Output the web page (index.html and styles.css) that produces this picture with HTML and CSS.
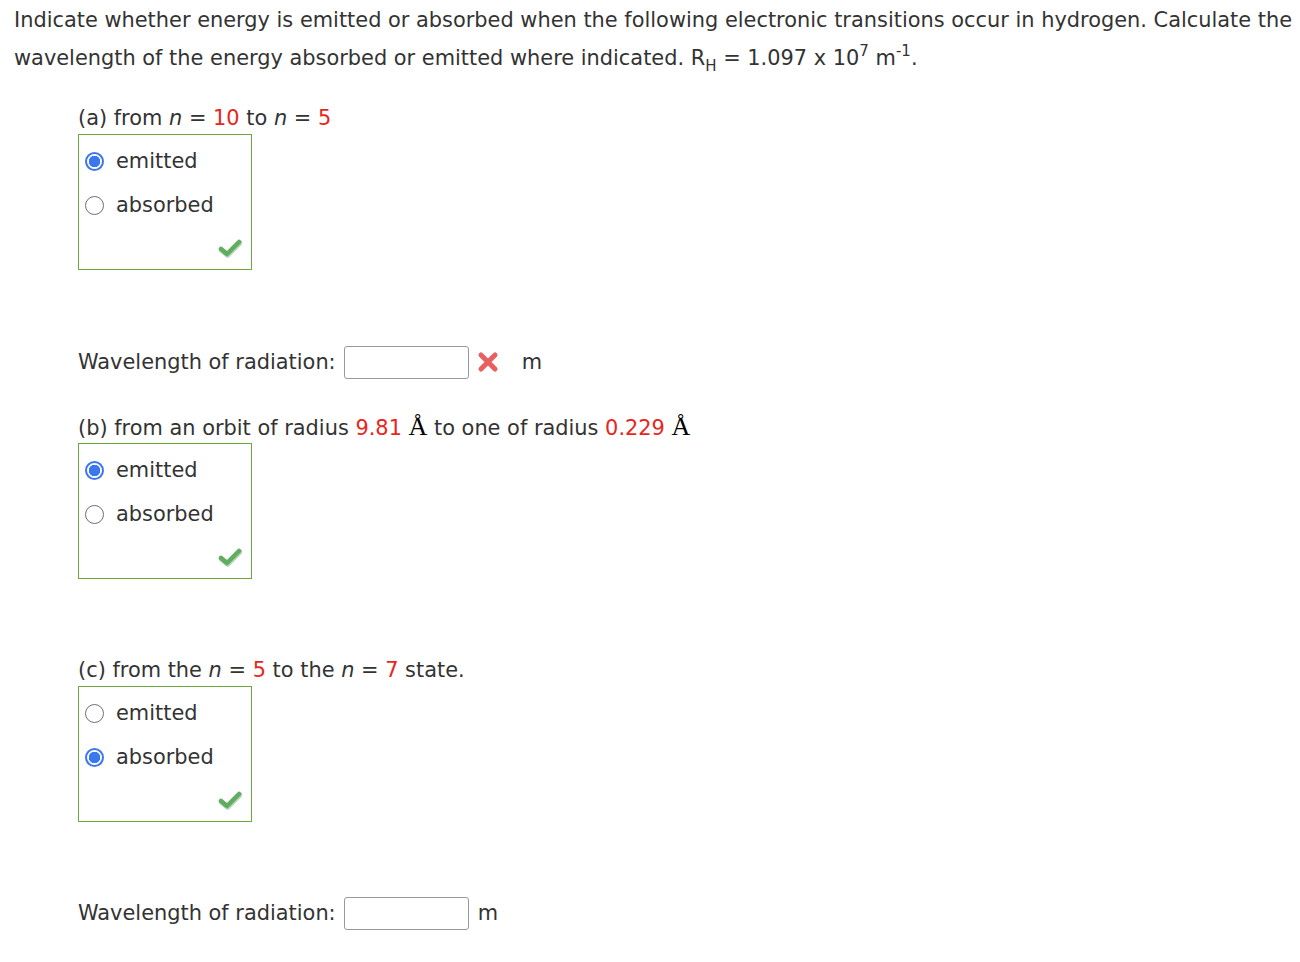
FILE: index.html
```html
<!DOCTYPE html>
<html>
<head>
<meta charset="utf-8">
<link rel="stylesheet" href="styles.css">
</head>
<body>
<div class="page">
  <p class="intro">Indicate whether energy is emitted or absorbed when the following electronic transitions occur in hydrogen. Calculate the<br>wavelength of the energy absorbed or emitted where indicated. R<sub>H</sub> = 1.097 x 10<sup>7</sup> m<sup>-1</sup>.</p>

  <div class="part first">
    <div class="label">(a) from <i>n</i> = <span class="red">10</span> to <i>n</i> = <span class="red">5</span></div>
    <div class="box">
      <div class="opt"><span class="radio on"></span>emitted</div>
      <div class="opt"><span class="radio"></span>absorbed</div>
      <div class="mark"><svg width="24" height="20" viewBox="0 0 24 20"><path d="M3 11 L9 16 L21 4" fill="none" stroke="#3e7e3e" stroke-opacity="0.35" stroke-width="5.5" stroke-linecap="round" stroke-linejoin="round" transform="translate(0.5,1)"/><path d="M3 11 L9 16 L21 4" fill="none" stroke="#5fae5f" stroke-width="4.5" stroke-linecap="round" stroke-linejoin="round"/></svg></div>
    </div>
    <div class="answer"><span class="prompt">Wavelength of radiation:</span><span class="input"></span><span class="cross"><svg width="22" height="22" viewBox="0 0 22 22"><path d="M4 4 L18 18 M18 4 L4 18" stroke="#e86060" stroke-width="5" stroke-linecap="round"/></svg></span><span class="unit spaced">m</span></div>
  </div>

  <div class="part">
    <div class="label">(b) from an orbit of radius <span class="red">9.81</span> <span class="ang">Å</span> to one of radius <span class="red">0.229</span> <span class="ang">Å</span></div>
    <div class="box">
      <div class="opt"><span class="radio on"></span>emitted</div>
      <div class="opt"><span class="radio"></span>absorbed</div>
      <div class="mark"><svg width="24" height="20" viewBox="0 0 24 20"><path d="M3 11 L9 16 L21 4" fill="none" stroke="#3e7e3e" stroke-opacity="0.35" stroke-width="5.5" stroke-linecap="round" stroke-linejoin="round" transform="translate(0.5,1)"/><path d="M3 11 L9 16 L21 4" fill="none" stroke="#5fae5f" stroke-width="4.5" stroke-linecap="round" stroke-linejoin="round"/></svg></div>
    </div>
  </div>

  <div class="part after-box">
    <div class="label">(c) from the <i>n</i> = <span class="red">5</span> to the <i>n</i> = <span class="red">7</span> state.</div>
    <div class="box">
      <div class="opt"><span class="radio"></span>emitted</div>
      <div class="opt"><span class="radio on"></span>absorbed</div>
      <div class="mark"><svg width="24" height="20" viewBox="0 0 24 20"><path d="M3 11 L9 16 L21 4" fill="none" stroke="#3e7e3e" stroke-opacity="0.35" stroke-width="5.5" stroke-linecap="round" stroke-linejoin="round" transform="translate(0.5,1)"/><path d="M3 11 L9 16 L21 4" fill="none" stroke="#5fae5f" stroke-width="4.5" stroke-linecap="round" stroke-linejoin="round"/></svg></div>
    </div>
    <div class="answer last"><span class="prompt">Wavelength of radiation:</span><span class="input"></span><span class="unit">m</span></div>
  </div>
</div>
</body>
</html>
```

FILE: styles.css
```css
html, body {
  margin: 0;
  padding: 0;
  background: #fff;
}
body {
  font-family: "DejaVu Sans", Verdana, sans-serif;
  font-size: 20.9px;
  color: #333;
}
.page {
  padding: 1px 0 0 14px;
}
.intro {
  margin: 0;
  line-height: 38px;
  white-space: nowrap;
}
.intro sub, .intro sup {
  font-size: 15px;
  line-height: 0;
}
.intro sub { vertical-align: -6px; }
.intro sup { vertical-align: 9px; }
.part {
  margin-left: 64px;
  padding-top: 33px;
}
.part.first {
  padding-top: 26px;
}
.part.after-box {
  padding-top: 76px;
}
.label {
  line-height: 30px;
  height: 30px;
  white-space: nowrap;
}
.red { color: #e8261c; }
.ang {
  font-family: "Liberation Serif", "DejaVu Serif", serif;
  font-size: 26px;
  color: #000;
}
.box {
  margin-top: 1px;
  border: 1px solid #6aa83a;
  padding-top: 4px;
  box-sizing: border-box;
  width: 174px;
  height: 136px;
}
.opt {
  height: 44px;
  display: flex;
  align-items: center;
  padding-left: 6px;
}
.radio {
  width: 19px;
  height: 19px;
  border: 1.5px solid #6e6e6e;
  border-radius: 50%;
  box-sizing: border-box;
  margin-right: 12px;
  flex: none;
}
.radio.on {
  border: 2px solid #3b78f0;
  background: radial-gradient(circle, #3b78f0 0 5.5px, #fff 6px);
}
.mark {
  display: flex;
  justify-content: flex-end;
  padding-right: 9px;
  padding-top: 11px;
}
.answer {
  margin-top: 75px;
  height: 34px;
  display: flex;
  align-items: center;
  white-space: nowrap;
}
.answer.last {
  margin-top: 74px;
}
.input {
  display: inline-block;
  width: 125px;
  height: 33px;
  border: 1px solid #999;
  border-radius: 3px;
  box-sizing: border-box;
  margin-left: 8px;
}
.cross {
  display: inline-flex;
  margin-left: 8px;
}
.unit {
  margin-left: 9px;
}
.unit.spaced {
  margin-left: 23px;
}
```
